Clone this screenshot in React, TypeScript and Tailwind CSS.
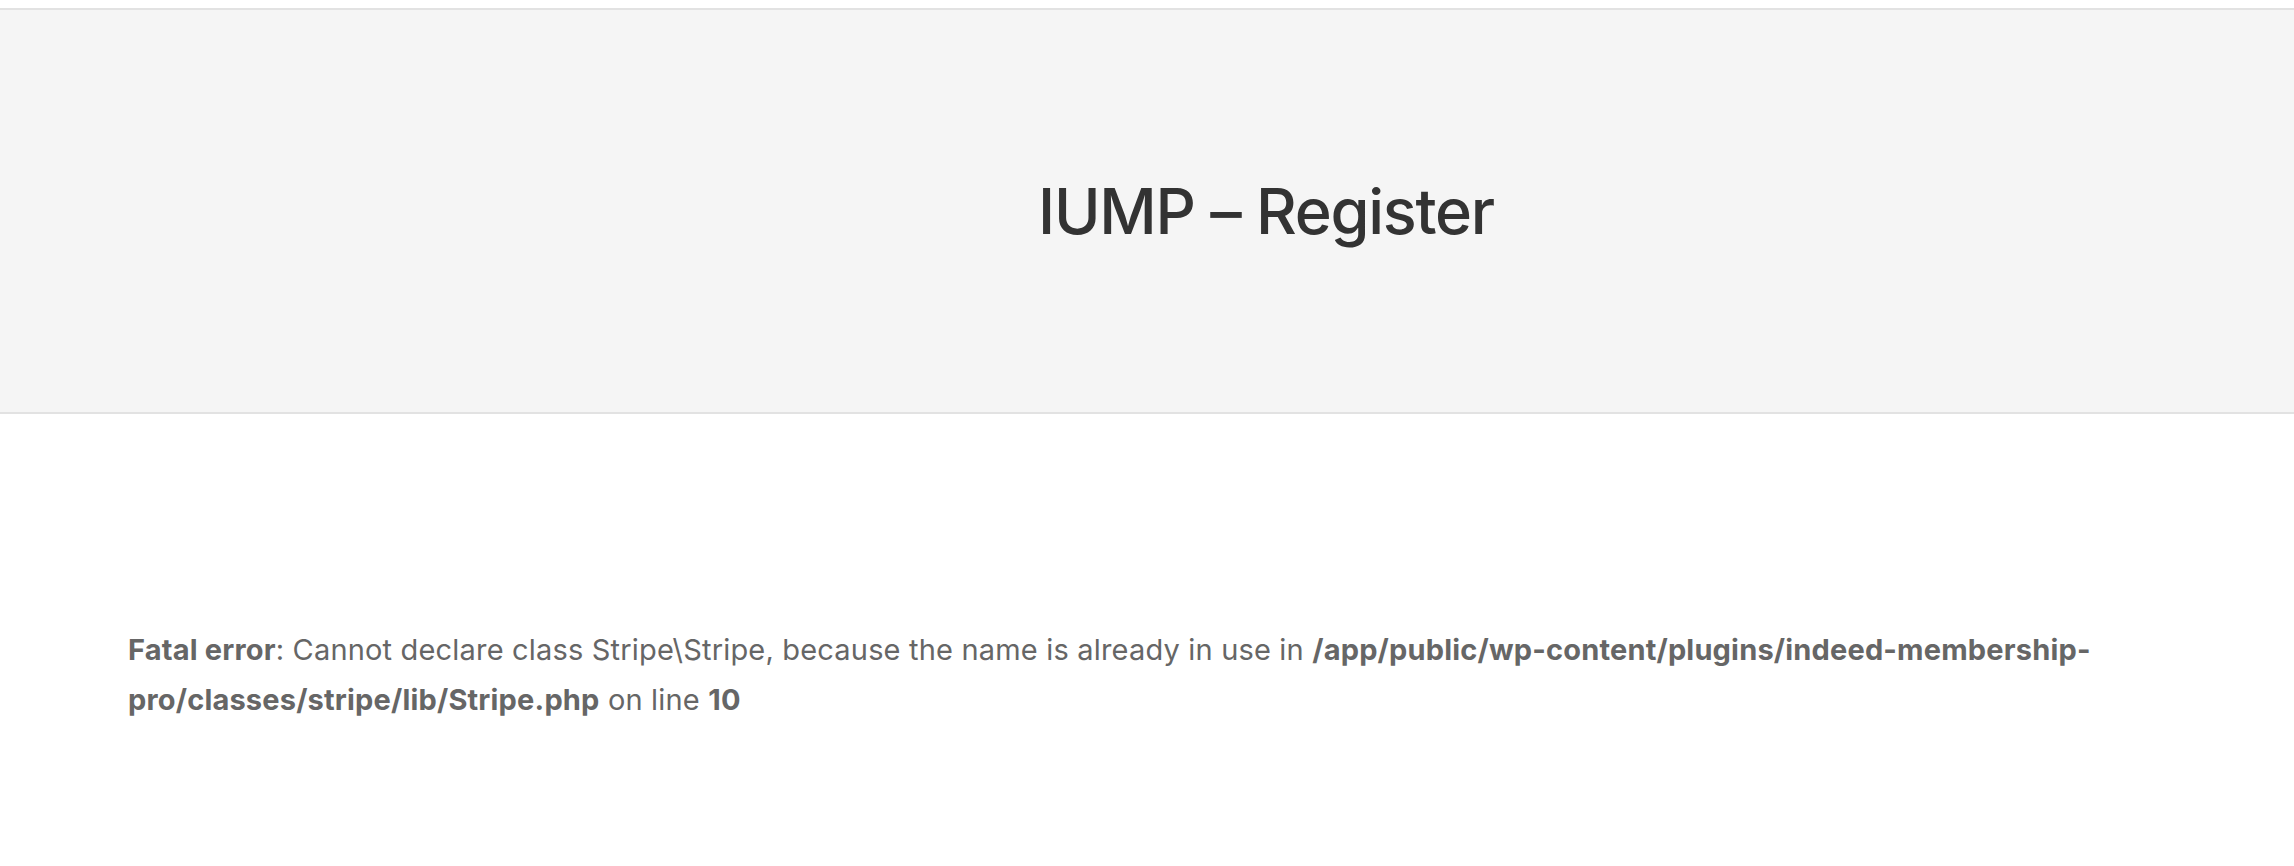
import React from 'react';

const App: React.FC = () => {
    return (
        <div className="min-h-screen bg-white font-['Inter',sans-serif]">
            {/* Page title band */}
            <div className="mt-[8px] border-y-2 border-[#e2e2e2] bg-[#f5f5f5] h-[406px] flex items-center justify-center pl-[238px]">
                <h1 className="text-[63px] leading-none font-medium text-[#333333] tracking-[-0.02em]">
                    IUMP – Register
                </h1>
            </div>

            {/* Error output */}
            <div className="px-[128px] pt-[211px]">
                <p className="text-[29px] leading-[50px] text-[#666666] tracking-[0.18px]">
                    <b className="font-bold">Fatal error</b>: Cannot declare class Stripe\Stripe, because the name is already in use in{' '}
                    <b className="font-bold">/app/public/wp-content/plugins/indeed-membership-<br />pro/classes/stripe/lib/Stripe.php</b> on line{' '}
                    <b className="font-bold">10</b>
                </p>
            </div>
        </div>
    );
};

export default App;
